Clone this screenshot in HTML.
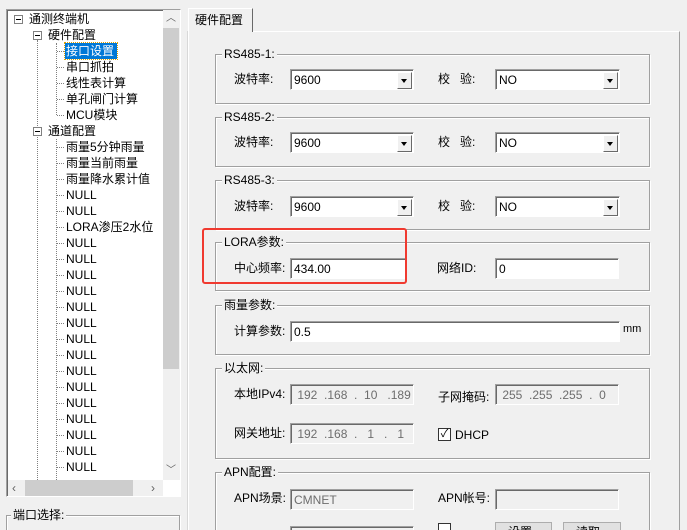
<!DOCTYPE html><html style="width:687px;height:530px;overflow:hidden"><head><meta charset="utf-8"><style>
*{margin:0;padding:0;box-sizing:border-box}
body{width:687px;height:530px;background:#f0f0f0;position:relative;overflow:hidden;font:12px "Liberation Sans","Noto Sans CJK SC",sans-serif;color:#000}
.a{position:absolute}
.t{position:absolute;white-space:nowrap;line-height:16px}
.g{position:absolute;border:1px solid #a0a0a0;box-shadow:inset 1px 1px 0 #fff,1px 1px 0 #fff}
.gl{position:absolute;background:#f0f0f0;padding:0 2px;line-height:14px;top:-8px;left:6px;white-space:nowrap}
.in{position:absolute;background:#fff;border:1px solid;border-color:#a0a0a0 #fff #fff #a0a0a0;box-shadow:inset 1px 1px 0 #696969;height:21px;padding:2px 0 0 3px;line-height:16px}
.dis{background:#f0f0f0;color:#6d6d6d}
.cb .btn{position:absolute;right:1px;top:2px;width:15px;height:17px;background:#f0f0f0;border:1px solid;border-color:#fff #696969 #696969 #fff}
.cb .btn:after{content:"";position:absolute;left:3px;top:6px;border:3.5px solid transparent;border-top:4px solid #000}
.dv{position:absolute;border-left:1px dotted #808080}
.dh{position:absolute;border-top:1px dotted #808080;width:8px}
.bx{position:absolute;width:9px;height:9px;border:1px solid #808080;background:#fff}
.bx:after{content:"";position:absolute;left:1px;top:3px;width:5px;height:1px;background:#000}
</style></head><body>
<div class="a" style="left:6px;top:9px;width:175px;height:488px;border:1px solid #a0a0a0;border-right-color:#fff;border-bottom-color:#fff;box-shadow:inset 1px 1px 0 #696969;background:#fff"></div>
<div class="dv" style="left:37px;top:40px;height:440px"></div>
<div class="dv" style="left:56px;top:43px;height:72px"></div>
<div class="dv" style="left:56px;top:139px;height:341px"></div>
<div class="bx" style="left:14px;top:15px"></div>
<div class="t" style="left:29px;top:11px">通测终端机</div>
<div class="bx" style="left:33px;top:31px"></div>
<div class="t" style="left:48px;top:27px">硬件配置</div>
<div class="bx" style="left:33px;top:127px"></div>
<div class="t" style="left:48px;top:123px">通道配置</div>
<div class="a" style="left:65px;top:43px;width:52px;height:16px;background:#0078d7;outline:1px dotted #e0a000"></div>
<div id="l2"></div>
<div class="a" style="left:163px;top:10px;width:17px;height:470px;background:#f0f0f0"></div>
<div class="a" style="left:163px;top:28px;width:16px;height:341px;background:#cdcdcd"></div>
<div class="t" style="left:166px;top:11px;font-size:10px;color:#606060">︿</div>
<div class="t" style="left:166px;top:463px;font-size:10px;color:#606060">﹀</div>
<div class="a" style="left:8px;top:480px;width:155px;height:16px;background:#f0f0f0"></div>
<div class="a" style="left:25px;top:480px;width:108px;height:16px;background:#cdcdcd"></div>
<div class="t" style="left:12px;top:480px;color:#606060">‹</div>
<div class="t" style="left:151px;top:480px;color:#606060">›</div>
<div class="g" style="left:6px;top:515px;width:174px;height:30px"><span class="gl" style="left:4px">端口选择:</span></div>
<div class="a" style="left:188px;top:31px;width:492px;height:510px;border-left:1px solid #fff;border-top:1px solid #fff;border-right:1px solid #a0a0a0;box-shadow:-1px 0 0 #d8d8d8"></div>
<div class="a" style="left:188px;top:8px;width:65px;height:24px;background:#f0f0f0;border:1px solid #fff;border-right:1px solid #696969;border-bottom:none"></div>
<div class="t" style="left:195px;top:12px">硬件配置</div>
<div id="r"></div>
<div class="a" style="left:202px;top:228px;width:205px;height:56px;border:2px solid #f03a30;border-radius:3px"></div>
<script>
var s='';
var l2=[['接口设置',51,1],['串口抓拍',67],['线性表计算',83],['单孔闸门计算',99],['MCU模块',115],['雨量5分钟雨量',147],['雨量当前雨量',163],['雨量降水累计值',179],['NULL',195],['NULL',211],['LORA渗压2水位',227]];
for(var y=243;y<=467;y+=16)l2.push(['NULL',y]);
l2.forEach(function(e){s+='<div class="dh" style="left:57px;top:'+e[1]+'px;width:7px"></div><div class="t" style="left:66px;top:'+(e[1]-8)+'px;'+(e[2]?'color:#fff':'')+'">'+e[0]+'</div>';});
document.getElementById('l2').innerHTML=s;
function grp(l,t,w,h,n){return '<div class="g" style="left:'+l+'px;top:'+t+'px;width:'+w+'px;height:'+h+'px"><span class="gl">'+n+'</span></div>';}
function lab(x,y,n){return '<div class="t" style="left:'+x+'px;top:'+(y-8)+'px">'+n+'</div>';}
function inp(x,y,w,v,c){return '<div class="in '+(c||'')+'" style="left:'+x+'px;top:'+(y-10)+'px;width:'+w+'px">'+v+'</div>';}
function cb(x,y,w,v){return '<div class="in cb" style="left:'+x+'px;top:'+(y-10)+'px;width:'+w+'px">'+v+'<div class="btn"></div></div>';}
var r='';
[[54,'RS485-1:',79],[117,'RS485-2:',142],[180,'RS485-3:',206]].forEach(function(g){
r+=grp(215,g[0],435,50,g[1])+lab(234,g[2],'波特率:')+cb(290,g[2],124,'9600')+lab(438,g[2],'校&nbsp;&nbsp;&nbsp;验:')+cb(495,g[2],125,'NO');});
r+=grp(215,242,435,49,'LORA参数:')+lab(234,268,'中心频率:')+inp(290,268,116,'434.00')+lab(437,268,'网络ID:')+inp(495,268,124,'0');
r+=grp(215,305,435,50,'雨量参数:')+lab(234,331,'计算参数:')+inp(290,331,330,'0.5')+'<div class="t" style="left:623px;top:321px;font-size:11px">mm</div>';
r+=grp(215,368,435,91,'以太网:')+lab(234,394,'本地IPv4:')+inp(290,394,124,'&nbsp;192&nbsp;&nbsp;.168&nbsp;&nbsp;.&nbsp;&nbsp;10&nbsp;&nbsp;&nbsp;.189','dis')+lab(438,397,'子网掩码:')+inp(495,394,124,'&nbsp;255&nbsp;&nbsp;.255&nbsp;&nbsp;.255&nbsp;&nbsp;.&nbsp;&nbsp;0','dis')
+lab(234,433,'网关地址:')+inp(290,433,124,'&nbsp;192&nbsp;&nbsp;.168&nbsp;&nbsp;.&nbsp;&nbsp;&nbsp;1&nbsp;&nbsp;&nbsp;.&nbsp;&nbsp;&nbsp;1','dis')
+'<div class="a" style="left:438px;top:428px;width:13px;height:13px;border:1px solid #333;background:#fff;font-size:11px;line-height:11px;text-align:center">✓</div>'+lab(455,435,'DHCP');
r+=grp(215,472,435,80,'APN配置:')+lab(234,498,'APN场景:')+inp(290,499,124,'CMNET','dis')+lab(438,498,'APN帐号:')+inp(495,499,124,'','dis');
r+=inp(290,536,124,'','dis')+'<div class="a" style="left:438px;top:523px;width:13px;height:13px;border:1px solid #333;background:#fff"></div>'
+'<div class="a" style="left:495px;top:522px;width:57px;height:22px;border:1px solid #adadad;background:#e1e1e1;padding-left:12px">设置</div>'
+'<div class="a" style="left:563px;top:522px;width:58px;height:22px;border:1px solid #adadad;background:#e1e1e1;padding-left:12px">读取</div>';
document.getElementById('r').innerHTML=r;
</script>
</body></html>
